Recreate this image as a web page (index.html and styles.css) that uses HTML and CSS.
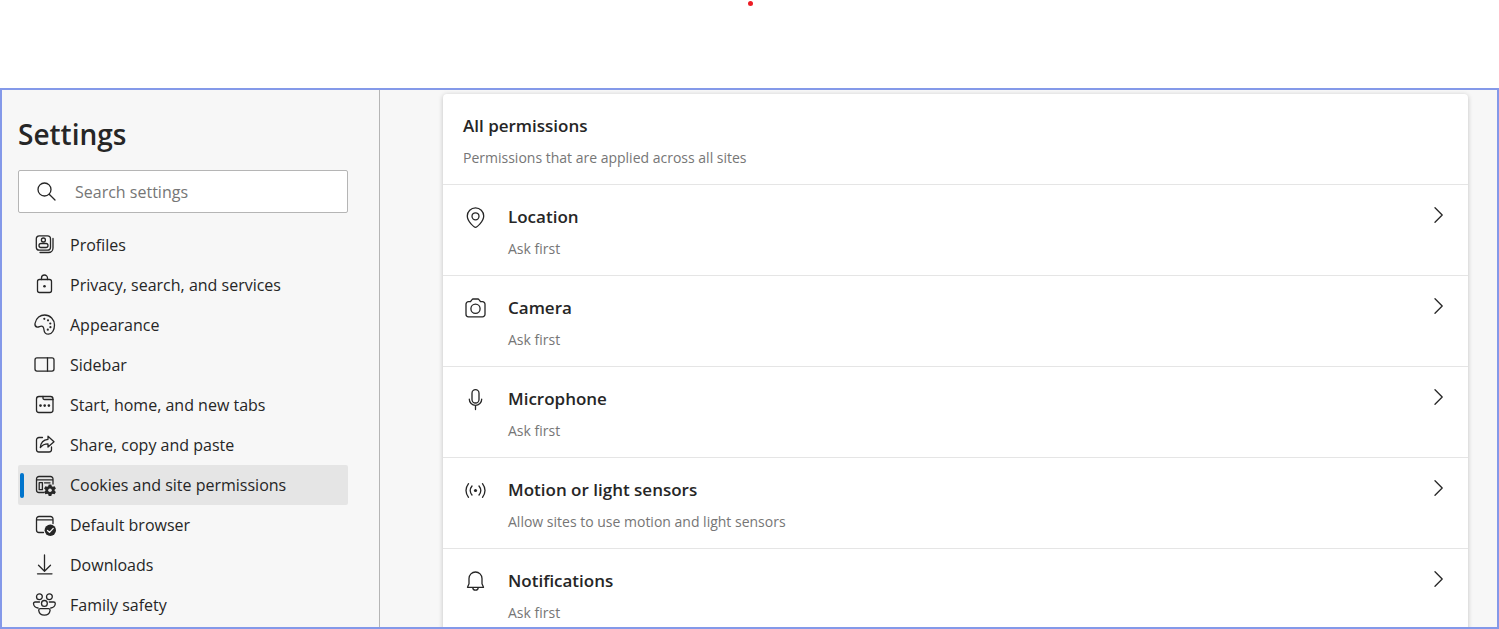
FILE: index.html
```html
<!DOCTYPE html>
<html lang="en">
<head>
<meta charset="utf-8">
<meta name="viewport" content="width=device-width, initial-scale=1">
<title>Settings</title>
<link rel="stylesheet" href="styles.css">
</head>
<body>
<div class="top"><span class="marker"></span></div>
<div class="frame">
  <aside class="sidebar">
    <h1 class="sidebar-title">Settings</h1>
    <label class="search">
      <svg class="icon" viewBox="0 0 24 24" aria-hidden="true"><circle cx="9.500" cy="9.500" r="6.500"/><path d="M14.200 14.200L20 20"/></svg>
      <input class="search-input" type="search" placeholder="Search settings" aria-label="Search settings">
    </label>
    <nav class="nav">
      <a class="nav-item" href="#"><svg class="icon" viewBox="0 0 24 24" aria-hidden="true"><rect x="4.300" y="2.800" width="14.200" height="14.400" rx="3"/><path d="M21 5.500v9.500a4.500 4.500 0 0 1-4.500 4.500H8"/><circle cx="11.400" cy="7" r="2"/><rect x="7" y="10.500" width="9" height="4" rx="2"/></svg>Profiles</a>
      <a class="nav-item" href="#"><svg class="icon" viewBox="0 0 24 24" aria-hidden="true"><rect x="5.500" y="6.500" width="14" height="13" rx="2"/><path d="M9.500 6.500V5a3 3 0 0 1 6 0v1.500"/><circle class="solid" cx="12.500" cy="13.200" r="1.300"/></svg>Privacy, search, and services</a>
      <a class="nav-item" href="#"><svg class="icon" viewBox="0 0 24 24" aria-hidden="true"><path d="M3 10.500C4 4.800 8.500 2 12.700 2c5.500 0 9.800 4.500 9.800 10 0 5-2.500 9.200-6 9.200-3.300 0-4.300-1.900-4.500-4.200-.2-2.300-1-3.900-2.700-3.900-1.400 0-2.700 1.300-4.300.9C3.400 13.600 2.700 12.300 3 10.500z"/><g class="solid"><circle cx="12.300" cy="5.800" r="1.100"/><circle cx="16" cy="7.300" r="1.100"/><circle cx="18.300" cy="10.500" r="1.100"/><circle cx="18.400" cy="14.200" r="1.100"/><circle cx="15.800" cy="16.700" r="1.100"/></g></svg>Appearance</a>
      <a class="nav-item" href="#"><svg class="icon" viewBox="0 0 24 24" aria-hidden="true"><rect x="3" y="4.900" width="19" height="13.200" rx="2"/><path d="M15.500 4.900v13.200"/></svg>Sidebar</a>
      <a class="nav-item" href="#"><svg class="icon" viewBox="0 0 24 24" aria-hidden="true"><rect x="4.500" y="3.500" width="16.500" height="16" rx="2.500"/><path d="M11 3.500v1.500c0 1 .5 1.500 1.500 1.500H21"/><g class="solid"><circle cx="8.500" cy="12.600" r="1.300"/><circle cx="12.700" cy="12.600" r="1.300"/><circle cx="16.900" cy="12.600" r="1.300"/></g></svg>Start, home, and new tabs</a>
      <a class="nav-item" href="#"><svg class="icon" viewBox="0 0 24 24" aria-hidden="true"><path d="M10.500 4.500H7A2.500 2.500 0 0 0 4.500 7v9.500A2.500 2.500 0 0 0 7 19h10a2.500 2.500 0 0 0 2.500-2.500V14"/><path d="M16 3.200l6 5.600-6 5.300v-3.200c-3.500 0-5.600 1-7.700 3.700.4-5 3-7.900 7.700-8.300z"/></svg>Share, copy and paste</a>
      <a class="nav-item nav-item-active" href="#" aria-current="page"><svg class="icon" viewBox="0 0 24 24" aria-hidden="true"><path d="M12 19.500H7A2.500 2.500 0 0 1 4.500 17V6A2.500 2.500 0 0 1 7 3.500h11.500A2.500 2.500 0 0 1 21 6v5M4.500 6.800H21M12.500 9.800h5.500"/><rect x="7.200" y="9.700" width="3.200" height="7"/><path class="solid" d="M16.700 11.500h2.600l.5 1.800 1 .5 1.800-.5 1.300 2.200-1.300 1.300v1l1.300 1.300-1.300 2.200-1.800-.5-1 .5-.5 1.700h-2.600l-.5-1.700-1-.5-1.800.5-1.300-2.200 1.300-1.300v-1l-1.300-1.300 1.300-2.200 1.800.5 1-.5z"/><circle class="hole" cx="18" cy="17.300" r="1.800"/></svg>Cookies and site permissions</a>
      <a class="nav-item" href="#"><svg class="icon" viewBox="0 0 24 24" aria-hidden="true"><path d="M11.500 19.500H7A2.500 2.500 0 0 1 4.500 17V6A2.500 2.500 0 0 1 7 3.500h11.500A2.500 2.500 0 0 1 21 6v4.500M4.500 6.800H21"/><circle class="solid" cx="18.300" cy="17.200" r="5.700"/><path class="tick" d="M15.500 17.500l2 1.900 3.700-4"/></svg>Default browser</a>
      <a class="nav-item" href="#"><svg class="icon" viewBox="0 0 24 24" aria-hidden="true"><path d="M12.500 2v16M6.500 12.300l6 6 6-6M5.500 20.800h14.500"/></svg>Downloads</a>
      <a class="nav-item" href="#"><svg class="icon" viewBox="0 0 24 24" aria-hidden="true"><circle cx="7.400" cy="3.700" r="2.900"/><circle cx="17.400" cy="3.700" r="2.900"/><circle cx="12.400" cy="10.400" r="2.900"/><path d="M7.500 9H3.200Q1.500 9 1.500 10.700 1.900 14.300 6 15M17.300 9h4.300q1.700 0 1.700 1.700-.4 3.600-4.500 4.300M8.300 15.700h8.200q1.600 0 1.600 1.600c-.5 3.300-2.600 4.900-5.700 4.900s-5.200-1.600-5.700-4.900q0-1.600 1.600-1.600z"/></svg>Family safety</a>
    </nav>
  </aside>
  <main class="content">
    <section class="card">
      <header class="card-header">
        <h2 class="row-title">All permissions</h2>
        <p class="row-note">Permissions that are applied across all sites</p>
      </header>
      <button class="row" type="button">
        <svg class="icon" viewBox="0 0 24 24" aria-hidden="true"><path d="M11.500 22.300c-1 0-8.200-5.500-8.200-11.200a8.200 8.200 0 0 1 16.400 0c0 5.700-7.200 11.200-8.200 11.200z"/><circle cx="11.500" cy="11.300" r="3.500"/></svg>
        <span class="row-text"><span class="row-title">Location</span><span class="row-note">Ask first</span></span>
        <svg class="chevron" viewBox="0 0 16 16" aria-hidden="true"><path d="M4 .8L11.200 8 4 15.200"/></svg>
      </button>
      <button class="row" type="button">
        <svg class="icon" viewBox="0 0 24 24" aria-hidden="true"><path d="M4.500 5.700h2L8 3.600Q8.400 3 9.100 3h4.800q.7 0 1.100.6l1.500 2.100h2A2.500 2.500 0 0 1 21 8.200v10.100a2.500 2.500 0 0 1-2.500 2.500h-14A2.500 2.500 0 0 1 2 18.300V8.200a2.500 2.500 0 0 1 2.500-2.500z"/><circle cx="11.500" cy="12.700" r="4.600"/></svg>
        <span class="row-text"><span class="row-title">Camera</span><span class="row-note">Ask first</span></span>
        <svg class="chevron" viewBox="0 0 16 16" aria-hidden="true"><path d="M4 .8L11.200 8 4 15.200"/></svg>
      </button>
      <button class="row" type="button">
        <svg class="icon" viewBox="0 0 24 24" aria-hidden="true"><rect x="8" y="2.700" width="7" height="13.300" rx="3.500"/><path d="M5.300 12.200a6.200 6.200 0 0 0 12.400 0M11.500 18.500v4"/></svg>
        <span class="row-text"><span class="row-title">Microphone</span><span class="row-note">Ask first</span></span>
        <svg class="chevron" viewBox="0 0 16 16" aria-hidden="true"><path d="M4 .8L11.200 8 4 15.200"/></svg>
      </button>
      <button class="row" type="button">
        <svg class="icon" viewBox="0 0 24 24" aria-hidden="true"><path d="M4.500 5.700q-5 6.800 0 13.600M8 8q-3.600 4.500 0 9M18.500 5.700q5 6.800 0 13.600M15 8q3.600 4.500 0 9"/><circle class="solid" cx="11.500" cy="12.500" r="1.600"/></svg>
        <span class="row-text"><span class="row-title">Motion or light sensors</span><span class="row-note">Allow sites to use motion and light sensors</span></span>
        <svg class="chevron" viewBox="0 0 16 16" aria-hidden="true"><path d="M4 .8L11.200 8 4 15.200"/></svg>
      </button>
      <button class="row" type="button">
        <svg class="icon" viewBox="0 0 24 24" aria-hidden="true"><path d="M3.500 18.300l1.500-3.500V9.500a6.500 6.500 0 0 1 13 0v5.300l1.500 3.500zM8.800 18.500a2.700 2.700 0 0 0 5.400 0"/></svg>
        <span class="row-text"><span class="row-title">Notifications</span><span class="row-note">Ask first</span></span>
        <svg class="chevron" viewBox="0 0 16 16" aria-hidden="true"><path d="M4 .8L11.200 8 4 15.200"/></svg>
      </button>
    </section>
  </main>
</div>
</body>
</html>
```

FILE: styles.css
```css
* {
  box-sizing: border-box;
}

body {
  display: flex;
  flex-direction: column;
  height: 100vh;
  margin: 0;
  overflow: hidden;
  background: #fff;
  color: #262626;
  font-family: "Open Sans", "Noto Sans", sans-serif;
  font-size: 16px;
}

.top {
  display: flex;
  flex: 0 0 88px;
  justify-content: center;
  padding: 1px 0 0 2px;
}

.marker {
  width: 5px;
  height: 5px;
  border-radius: 50%;
  background: #ed1c24;
}

.frame {
  display: flex;
  flex: 1;
  min-height: 0;
  overflow: hidden;
  border: 2px solid #8499e9;
  background: #f7f7f7;
}

.sidebar {
  flex: 0 0 378px;
  padding: 24px 31px 0 16px;
  border-right: 1px solid #b5b5b5;
}

.sidebar-title {
  margin: 0 0 16px;
  font-size: 28px;
  font-weight: 600;
  line-height: 40px;
}

.search {
  display: flex;
  align-items: center;
  gap: 16px;
  height: 43px;
  padding: 0 16px;
  border: 1px solid #b5b5b5;
  border-radius: 2px;
  background: #fff;
}

.search-input {
  flex: 1;
  min-width: 0;
  padding: 0;
  border: 0;
  outline: 0;
  background: none;
  color: inherit;
  font: inherit;
}

.search-input::placeholder {
  color: #767676;
}

.nav {
  margin-top: 12px;
}

.nav-item {
  position: relative;
  display: flex;
  align-items: center;
  gap: 14px;
  height: 40px;
  padding: 0 14px;
  border-radius: 2px;
  color: inherit;
  text-decoration: none;
  white-space: nowrap;
}

.nav-item-active {
  background: #e5e5e5;
}

.nav-item-active::before {
  position: absolute;
  top: 8px;
  left: 2px;
  width: 4px;
  height: 25px;
  border-radius: 2px;
  background: #0074cc;
  content: "";
}

.icon,
.chevron {
  flex: none;
  width: 24px;
  height: 24px;
  fill: none;
  stroke: #262626;
  stroke-width: 1.3;
  stroke-linecap: round;
  stroke-linejoin: round;
}

.solid {
  fill: #262626;
  stroke: none;
}

.hole {
  fill: #e5e5e5;
  stroke: none;
}

.tick {
  stroke: #f7f7f7;
}

.chevron {
  width: 16px;
  height: 16px;
  margin-top: 2px;
}

.content {
  flex: 1;
  min-width: 0;
  padding: 4px 29px 0 63px;
}

.card {
  border-radius: 4px;
  background: #fff;
  box-shadow: 0 1px 5px rgba(0, 0, 0, 0.22);
}

.card-header {
  padding: 20px 20px 16px;
  border-bottom: 1px solid #e5e5e5;
}

.row {
  display: flex;
  align-items: flex-start;
  gap: 20px;
  width: 100%;
  padding: 20px 21px 16px;
  border: 0;
  border-bottom: 1px solid #e5e5e5;
  background: none;
  color: inherit;
  font: inherit;
  text-align: left;
}

.row-text {
  flex: 1;
}

.row-title {
  display: block;
  margin: 0;
  font-size: 17px;
  font-weight: 600;
  line-height: 24px;
}

.row-note {
  display: block;
  margin: 10px 0 0;
  color: #767676;
  font-size: 14px;
  line-height: 20px;
}
```
